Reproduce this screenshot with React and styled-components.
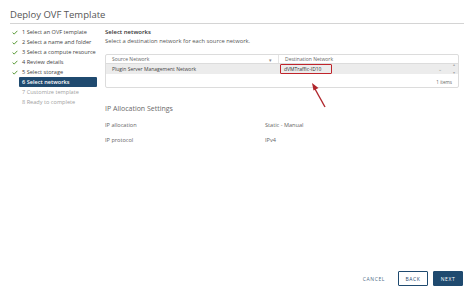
import React from "react";
import styled, { createGlobalStyle } from "styled-components";

const Global = createGlobalStyle`
  html, body { margin: 0; padding: 0; background: #fff; }
  body { font-family: "Open Sans", "Liberation Sans", sans-serif; color: #565656; }
  * { box-sizing: border-box; }
`;

const Page = styled.div`
  width: 474px;
  height: 296px;
  padding: 0 10px 10px 10px;
  display: flex;
  flex-direction: column;
  overflow: hidden;
`;

const Header = styled.div`
  padding-top: 9px;
  height: 24px;
  font-size: 9.5px;
  line-height: 12px;
  color: #565656;
  border-bottom: 1px solid #d4d4d4;
`;

const Body = styled.div`
  display: flex;
  flex: 1;
`;

const Nav = styled.div`
  width: 95px;
  padding-top: 3px;
  display: flex;
  flex-direction: column;
`;

const Step = styled.div`
  height: 10px;
  display: flex;
  align-items: center;
  font-size: 5.6px;
  margin-left: ${(p) => (p.$active ? "9px" : "0")};
  padding-left: ${(p) => (p.$active ? "3px" : "12px")};
  margin-right: ${(p) => (p.$active ? "8px" : "0")};
  border-radius: 1px;
  position: relative;
  background: ${(p) => (p.$active ? "#1f4a6f" : "transparent")};
  color: ${(p) => (p.$active ? "#fff" : p.$pending ? "#a0a0a0" : "#3f3f3f")};
  font-weight: ${(p) => (p.$active ? 600 : 400)};
`;

const Check = styled.svg`
  position: absolute;
  left: 2px;
  top: 3px;
`;

const Main = styled.div`
  flex: 1;
  position: relative;
  padding-top: 4px;
  padding-right: 5px;
`;

const SectionTitle = styled.div`
  font-size: 6px;
  font-weight: 600;
  color: #333;
  line-height: 9px;
`;

const Desc = styled.div`
  font-size: 5.8px;
  color: #555;
  line-height: 9px;
`;

const Table = styled.div`
  margin-top: 8px;
  border: 1px solid #dcdcdc;
  border-radius: 2px;
  height: 34px;
  display: flex;
  flex-direction: column;
  font-size: 5px;
`;

const HeadRow = styled.div`
  display: grid;
  grid-template-columns: 172px 1fr;
  height: 9px;
  border-bottom: 1px solid #dcdcdc;
  color: #666;
`;

const Cell = styled.div`
  display: flex;
  align-items: center;
  padding-left: ${(p) => p.$pad || 6}px;
  border-left: ${(p) => (p.$divider ? "1px solid #e4e4e4" : "none")};
  position: relative;
`;

const FilterIcon = styled.span`
  position: absolute;
  right: 6px;
  top: 2px;
  font-size: 5px;
  color: #888;
`;

const DataRow = styled.div`
  display: grid;
  grid-template-columns: 172px 1fr;
  height: 10px;
  background: #ececec;
  color: #444;
`;

const SelectBox = styled.div`
  flex: 1;
  height: 10px;
  display: flex;
  align-items: center;
  position: relative;
`;

const Highlight = styled.div`
  height: 10px;
  width: 52px;
  margin-left: -2px;
  border: 1.5px solid #c0242b;
  display: flex;
  align-items: center;
  padding-left: 3px;
  color: #333;
  font-size: 5px;
  border-radius: 1px;
`;

const Chevron = styled.span`
  position: absolute;
  right: 16px;
  top: 2px;
  color: #999;
  font-size: 5px;
`;

const ScrollBar = styled.div`
  position: absolute;
  right: 2px;
  top: -1px;
  width: 4px;
  height: 12px;
  display: flex;
  flex-direction: column;
  justify-content: space-between;
  align-items: center;
  color: #aaa;
  font-size: 4px;
  line-height: 4px;
`;

const TableFoot = styled.div`
  flex: 1;
  display: flex;
  align-items: flex-end;
  justify-content: flex-end;
  padding: 0 6px 2px 0;
  color: #666;
  font-size: 4.6px;
`;

const SubHeading = styled.div`
  margin-top: 16px;
  font-size: 7px;
  line-height: 10px;
  color: #6a6a6a;
`;

const KV = styled.div`
  display: grid;
  grid-template-columns: 160px 1fr;
  font-size: 5.6px;
  color: #666;
  margin-top: ${(p) => p.$mt}px;
  line-height: 8px;
`;

const Arrow = styled.svg`
  position: absolute;
  left: 204px;
  top: 58px;
  pointer-events: none;
`;

const Footer = styled.div`
  display: flex;
  justify-content: flex-end;
  align-items: center;
  gap: 5px;
  padding-right: 1px;
`;

const Button = styled.button`
  height: 15px;
  min-width: 30px;
  padding: 0 6px;
  font-family: "Open Sans", "Liberation Sans", sans-serif;
  font-size: 5px;
  letter-spacing: 0.6px;
  border-radius: 1px;
  cursor: pointer;
  border: 1px solid ${(p) => (p.$variant === "link" ? "transparent" : "#1f4a6f")};
  background: ${(p) => (p.$variant === "primary" ? "#1f4a6f" : "#fff")};
  color: ${(p) => (p.$variant === "primary" ? "#fff" : p.$variant === "link" ? "#4f6d88" : "#1f4a6f")};
  margin-right: ${(p) => (p.$variant === "link" ? "1px" : "0")};
`;

const steps = [
  { n: 1, t: "Select an OVF template", done: true },
  { n: 2, t: "Select a name and folder", done: true },
  { n: 3, t: "Select a compute resource", done: true },
  { n: 4, t: "Review details", done: true },
  { n: 5, t: "Select storage", done: true },
  { n: 6, t: "Select networks", active: true },
  { n: 7, t: "Customize template", pending: true },
  { n: 8, t: "Ready to complete", pending: true },
];

export default function App() {
  return (
    <>
      <Global />
      <Page>
        <Header>Deploy OVF Template</Header>
        <Body>
          <Nav>
            {steps.map((s) => (
              <Step key={s.n} $active={s.active} $pending={s.pending}>
                {s.done && (
                  <Check width="6" height="5" viewBox="0 0 6 5">
                    <path d="M0.6 2.6 L2.2 4.1 L5.4 0.8" fill="none" stroke="#5b9b3a" strokeWidth="1" />
                  </Check>
                )}
                {s.n} {s.t}
              </Step>
            ))}
          </Nav>
          <Main>
            <SectionTitle>Select networks</SectionTitle>
            <Desc>Select a destination network for each source network.</Desc>
            <Table>
              <HeadRow>
                <Cell>
                  Source Network
                  <FilterIcon>▾</FilterIcon>
                </Cell>
                <Cell $divider>Destination Network</Cell>
              </HeadRow>
              <DataRow>
                <Cell>Plugin Server Management Network</Cell>
                <Cell $pad={4}>
                  <SelectBox>
                    <Highlight>dVMTraffic-ID10</Highlight>
                    <Chevron>⌄</Chevron>
                    <ScrollBar>
                      <span>▴</span>
                      <span>▾</span>
                    </ScrollBar>
                  </SelectBox>
                </Cell>
              </DataRow>
              <TableFoot>1 items</TableFoot>
            </Table>
            <SubHeading>IP Allocation Settings</SubHeading>
            <KV $mt={7}>
              <span>IP allocation</span>
              <span>Static - Manual</span>
            </KV>
            <KV $mt={7}>
              <span>IP protocol</span>
              <span>IPv4</span>
            </KV>
            <Arrow width="20" height="28" viewBox="0 0 20 28">
              <path d="M16 25 L6 7" stroke="#b0262c" strokeWidth="1.4" fill="none" />
              <path d="M3 1 L9.5 6 L4.5 8.5 Z" fill="#b0262c" />
            </Arrow>
          </Main>
        </Body>
        <Footer>
          <Button $variant="link">CANCEL</Button>
          <Button $variant="outline">BACK</Button>
          <Button $variant="primary">NEXT</Button>
        </Footer>
      </Page>
    </>
  );
}
